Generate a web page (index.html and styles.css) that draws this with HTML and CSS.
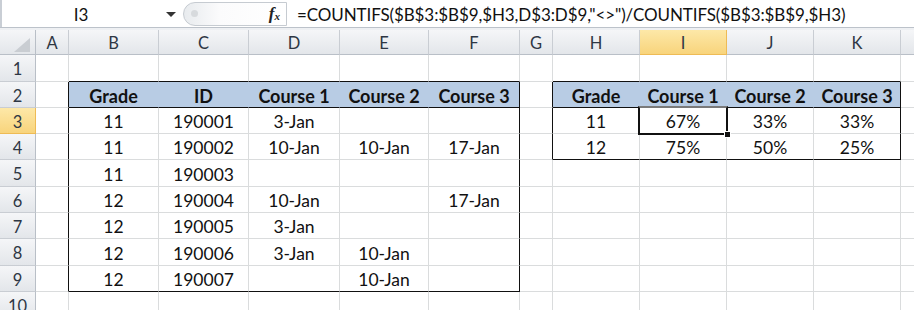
FILE: index.html
```html
<!DOCTYPE html>
<html lang="en">
<head>
    <meta charset="UTF-8">
    <meta name="viewport" content="width=device-width, initial-scale=1.0">
    <title>COUNTIFS — Course completion</title>
    <link rel="stylesheet" href="styles.css">
</head>
<body>
    <!-- Formula bar -->
    <div class="formula-bar">
        <div class="name-box">I3</div>
        <div class="name-arrow"></div>
        <div class="fx-box">
            <span class="dot"></span>
            <span class="fx"><i>f</i><sub>x</sub></span>
        </div>
        <div class="formula">=COUNTIFS($B$3:$B$9,$H3,D$3:D$9,"&lt;&gt;")/COUNTIFS($B$3:$B$9,$H3)</div>
    </div>
    <div class="bar-gap"></div>

    <!-- Sheet -->
    <div class="sheet">
        <div class="row head">
            <div class="corner">
                <svg width="16" height="14" viewBox="0 0 16 14"><polygon points="16,0 16,14 0,14" fill="#c9cdd2"/></svg>
            </div>
            <div class="ch">A</div><div class="ch">B</div><div class="ch">C</div><div class="ch">D</div>
            <div class="ch">E</div><div class="ch">F</div><div class="ch">G</div><div class="ch">H</div>
            <div class="ch sel">I</div><div class="ch">J</div><div class="ch">K</div><div class="ch"></div>
        </div>

        <div class="row tall">
            <div class="rh">1</div><div></div>
            <div class="bb"></div><div class="bb"></div><div class="bb"></div><div class="bb"></div><div class="bb"></div>
            <div></div>
            <div class="bb"></div><div class="bb"></div><div class="bb"></div><div class="bb"></div>
            <div></div>
        </div>

        <div class="row">
            <div class="rh">2</div><div class="br"></div>
            <div class="hd bb">Grade</div><div class="hd bb">ID</div><div class="hd bb">Course 1</div>
            <div class="hd bb">Course 2</div><div class="hd bb br">Course 3</div>
            <div class="br"></div>
            <div class="hd bb">Grade</div><div class="hd bb">Course 1</div><div class="hd bb">Course 2</div>
            <div class="hd bb br">Course 3</div>
            <div></div>
        </div>

        <div class="row">
            <div class="rh sel">3</div><div class="br"></div>
            <div>11</div><div>190001</div><div>3-Jan</div><div></div><div class="br"></div>
            <div class="br"></div>
            <div>11</div><div class="cur">67%</div><div>33%</div><div class="br">33%</div>
            <div></div>
        </div>

        <div class="row">
            <div class="rh">4</div><div class="br"></div>
            <div>11</div><div>190002</div><div>10-Jan</div><div>10-Jan</div><div class="br">17-Jan</div>
            <div class="br"></div>
            <div class="bb">12</div><div class="bb">75%</div><div class="bb">50%</div><div class="bb br">25%</div>
            <div></div>
        </div>

        <div class="row tall">
            <div class="rh">5</div><div class="br"></div>
            <div>11</div><div>190003</div><div></div><div></div><div class="br"></div>
            <div></div><div></div><div></div><div></div><div></div><div></div>
        </div>

        <div class="row">
            <div class="rh">6</div><div class="br"></div>
            <div>12</div><div>190004</div><div>10-Jan</div><div></div><div class="br">17-Jan</div>
            <div></div><div></div><div></div><div></div><div></div><div></div>
        </div>

        <div class="row">
            <div class="rh">7</div><div class="br"></div>
            <div>12</div><div>190005</div><div>3-Jan</div><div></div><div class="br"></div>
            <div></div><div></div><div></div><div></div><div></div><div></div>
        </div>

        <div class="row tall">
            <div class="rh">8</div><div class="br"></div>
            <div>12</div><div>190006</div><div>3-Jan</div><div>10-Jan</div><div class="br"></div>
            <div></div><div></div><div></div><div></div><div></div><div></div>
        </div>

        <div class="row">
            <div class="rh">9</div><div class="br"></div>
            <div class="bb">12</div><div class="bb">190007</div><div class="bb"></div><div class="bb">10-Jan</div><div class="bb br"></div>
            <div></div><div></div><div></div><div></div><div></div><div></div>
        </div>

        <div class="row">
            <div class="rh">10</div><div></div>
            <div></div><div></div><div></div><div></div><div></div>
            <div></div><div></div><div></div><div></div><div></div><div></div>
        </div>
    </div>
</body>
</html>
```

FILE: styles.css
```css
body {
    margin: 0;
    width: 914px;
    height: 310px;
    overflow: hidden;
    background: #fff;
    font-family: Lato, "Open Sans", sans-serif;
    color: #111;
}

/* formula bar */
.formula-bar {
    display: flex;
    align-items: center;
    height: 27px;
    border-left: 2px solid #c9ced5;
    box-sizing: border-box;
    font-size: 17px;
}
.name-box {
    width: 158px;
    text-align: center;
    padding-top: 1px;
}
.name-arrow {
    width: 0;
    height: 0;
    margin: 2px 7px 0 6px;
    border-left: 5px solid transparent;
    border-right: 5px solid transparent;
    border-top: 5px solid #333;
}
.fx-box {
    position: relative;
    display: flex;
    align-items: center;
    justify-content: space-between;
    width: 104px;
    height: 24px;
    box-sizing: border-box;
    border: 1px solid #c6cbd1;
    border-radius: 12px 0 0 12px;
    background: linear-gradient(to right, #e8ebee, #fbfbfc 35%, #fff);
    padding: 0 6px 0 7px;
}
.dot {
    width: 7px;
    height: 7px;
    border-radius: 50%;
    background: #d7dadd;
}
.fx {
    font-family: "Liberation Serif", serif;
    font-weight: 700;
    font-size: 17px;
    color: #222;
}
.fx sub {
    font-size: 11px;
    font-style: italic;
    vertical-align: -1px;
}
.formula {
    margin-left: 10px;
    padding-top: 1px;
    white-space: nowrap;
    letter-spacing: -0.1px;
}
.bar-gap {
    height: 3px;
    box-sizing: border-box;
    border-top: 1px solid #bcc2ca;
    background: #eef0f3;
}

/* grid */
.row {
    display: grid;
    grid-template-columns: 36px 33px 90px 90px 91px 89px 91px 33px 87px 87px 87px 87px 40px;
    height: 26px;
}
.row.tall {
    height: 27px;
}
.row.head {
    height: 25px;
}
.row > div {
    box-sizing: border-box;
    display: flex;
    align-items: center;
    justify-content: center;
    padding-top: 2px;
    border-right: 1px solid #dadcdd;
    border-bottom: 1px solid #dadcdd;
    font-size: 17.5px;
    white-space: nowrap;
}

.corner {
    align-items: flex-end !important;
    justify-content: flex-end !important;
    padding: 0 5px 2px 0 !important;
    background: linear-gradient(#f5f6f8, #e3e6ea);
    border-right-color: #b9bfc7 !important;
    border-bottom-color: #b9bfc7 !important;
}
.ch, .rh {
    background: linear-gradient(#f5f6f8, #e3e6ea);
    color: #2e3744;
    font-size: 16.5px !important;
}
.ch {
    border-right-color: #c9cdd3 !important;
    border-bottom-color: #b9bfc7 !important;
}
.rh {
    border-right-color: #b9bfc7 !important;
    border-bottom-color: #c9cdd3 !important;
}
.ch.sel, .rh.sel {
    background: linear-gradient(#fde8a8, #f8d47c);
    border-color: #eebb55 !important;
}

/* table styling */
.hd {
    background: #b8cce4;
    font-weight: 700;
    font-size: 18px !important;
    border-right-color: #b8cce4 !important;
}
.bb {
    border-bottom-color: #111 !important;
}
.br {
    border-right-color: #111 !important;
}

/* active cell */
.cur {
    position: relative;
}
.cur::after {
    content: "";
    position: absolute;
    left: -2px;
    top: -2px;
    right: -2px;
    bottom: -2px;
    border: 2px solid #111;
    border-top-color: #7a7a7a;
}
.cur::before {
    content: "";
    position: absolute;
    right: -5px;
    bottom: -5px;
    width: 5px;
    height: 5px;
    background: #111;
    border: 1px solid #fff;
    z-index: 2;
}
```
